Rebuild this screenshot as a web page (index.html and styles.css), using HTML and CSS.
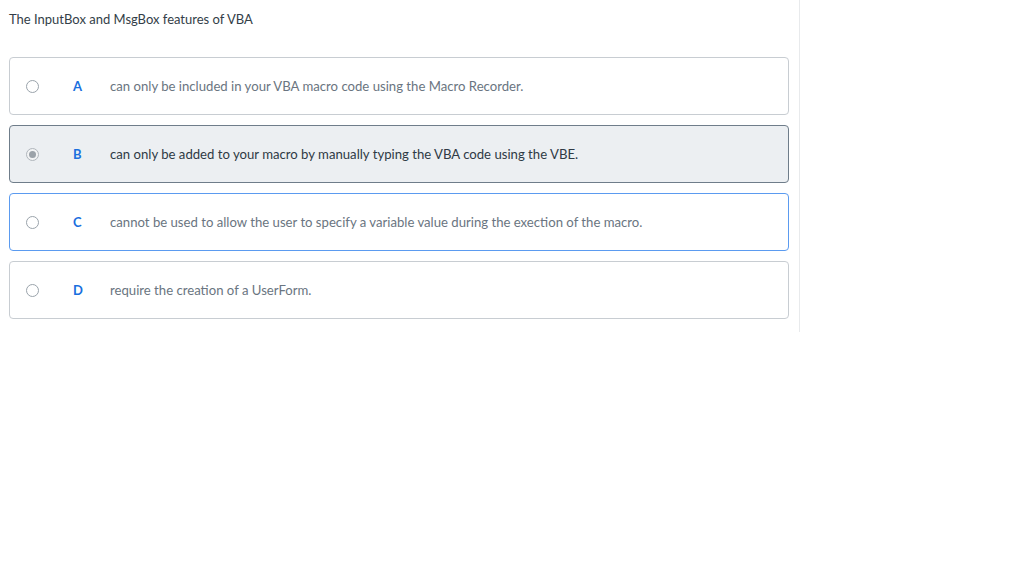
FILE: index.html
```html
<!DOCTYPE html>
<html>
<head>
<meta charset="utf-8">
<link rel="stylesheet" href="styles.css">
</head>
<body>
<div class="page">
  <main class="question">
    <p class="stem">The InputBox and MsgBox features of VBA</p>
    <div class="options">
      <div class="option">
        <span class="radio"></span>
        <span class="letter">A</span>
        <span class="text">can only be included in your VBA macro code using the Macro Recorder.</span>
      </div>
      <div class="option selected">
        <span class="radio checked"></span>
        <span class="letter">B</span>
        <span class="text">can only be added to your macro by manually typing the VBA code using the VBE.</span>
      </div>
      <div class="option focused">
        <span class="radio"></span>
        <span class="letter">C</span>
        <span class="text">cannot be used to allow the user to specify a variable value during the exection of the macro.</span>
      </div>
      <div class="option">
        <span class="radio"></span>
        <span class="letter">D</span>
        <span class="text">require the creation of a UserForm.</span>
      </div>
    </div>
  </main>
</div>
</body>
</html>
```
FILE: styles.css
```css
html, body {
  margin: 0;
  padding: 0;
  background: #fff;
}
body {
  font-family: "Source Sans Pro", "Lato", "Open Sans", sans-serif;
  color: #333e48;
}
.page {
  display: flex;
}
.question {
  width: 800px;
  height: 332px;
  border-right: 1px solid #e8eaec;
  box-sizing: border-box;
  padding: 0 10px 0 9px;
}
.stem {
  margin: 0;
  padding-top: 11px;
  height: 57px;
  box-sizing: border-box;
  font-size: 13px;
  line-height: 16px;
  color: #333e48;
}
.options {
  display: flex;
  flex-direction: column;
  gap: 10px;
  width: 780px;
}
.option {
  height: 58px;
  box-sizing: border-box;
  border: 1px solid #c8cdd2;
  border-radius: 4px;
  display: flex;
  align-items: center;
  padding-left: 16px;
  background: #fff;
}
.option.selected {
  background: #eceff2;
  border-color: #6f7d8a;
}
.option.focused {
  border-color: #5b9bf0;
}
.radio {
  width: 13px;
  height: 13px;
  box-sizing: border-box;
  border: 1px solid #9aa3ab;
  border-radius: 50%;
  background: #fff;
  flex: none;
  display: flex;
  align-items: center;
  justify-content: center;
}
.radio.checked {
  background: #f2f3f4;
  border-color: #b0b6bc;
}
.radio.checked::after {
  content: "";
  width: 7px;
  height: 7px;
  border-radius: 50%;
  background: #9ba2a9;
}
.letter {
  width: 20px;
  margin-left: 34px;
  font-weight: 700;
  font-size: 13px;
  color: #1a6fde;
  flex: none;
}
.text {
  margin-left: 17px;
  font-size: 13.15px;
  color: #6a7581;
}
.option.selected .text {
  color: #2f3a45;
}
```
